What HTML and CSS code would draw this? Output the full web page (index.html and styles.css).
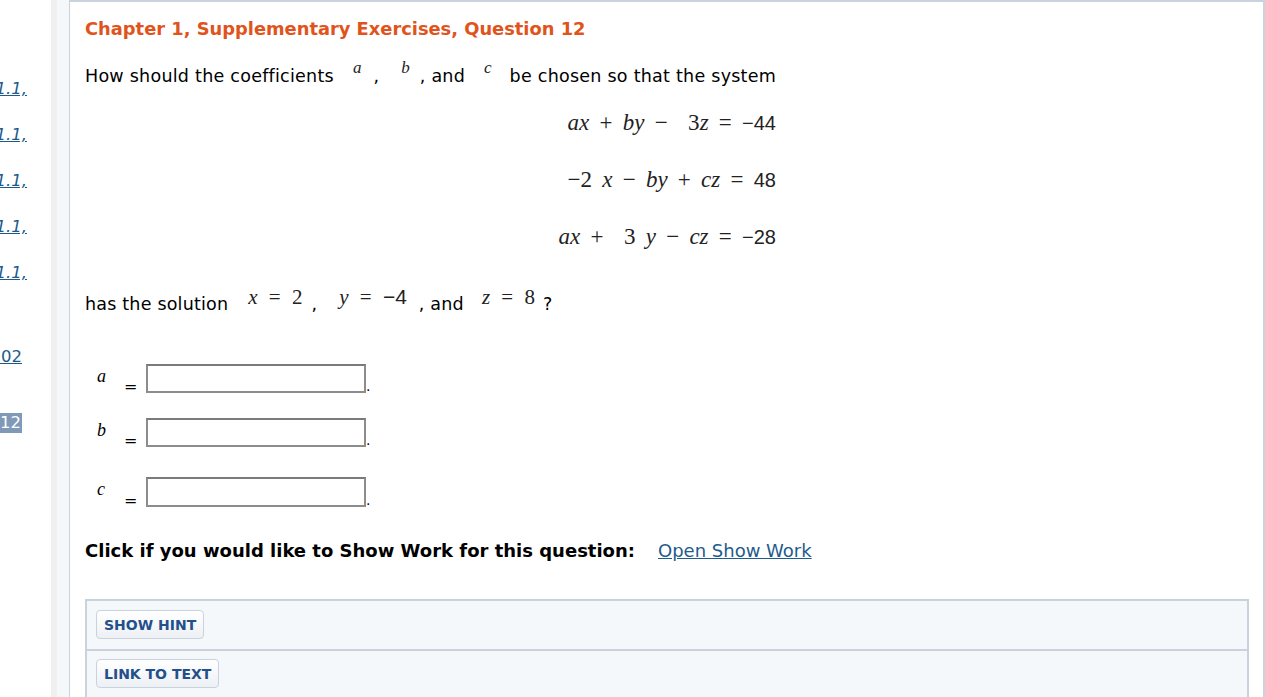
FILE: index.html
```html
<!DOCTYPE html>
<html>
<head>
<meta charset="utf-8">
<link rel="stylesheet" href="styles.css">
</head>
<body>
<div class="page">
  <nav class="sidebar">
    <div class="nav-item nav-first"><a class="nav-link it" href="#">Section 1.1,</a></div>
    <div class="nav-item"><a class="nav-link it" href="#">Section 1.1,</a></div>
    <div class="nav-item"><a class="nav-link it" href="#">Section 1.1,</a></div>
    <div class="nav-item"><a class="nav-link it" href="#">Section 1.1,</a></div>
    <div class="nav-item"><a class="nav-link it" href="#">Section 1.1,</a></div>
    <div class="nav-item nav-gap"><a class="nav-link short" href="#">Question 02</a></div>
    <div class="nav-item nav-gap2"><span class="nav-current">Question 12</span></div>
  </nav>
  <div class="gutter"><div class="gutter-gray"></div><div class="gutter-blue"></div></div>
  <main class="panel">
    <h1 class="title">Chapter 1, Supplementary Exercises, Question 12</h1>
    <p class="q-line">How should the coefficients<span class="m up"><i>a</i></span>,<span class="m up up-b"><i>b</i></span>, and<span class="m up up-c"><i>c</i></span>be chosen so that the system</p>
    <div class="system">
      <div class="eq"><i>ax</i> + <i>by</i> −&nbsp; 3<i>z</i> = <span class="num">−44</span></div>
      <div class="eq"><span class="lead">−2</span> <i>x</i> − <i>by</i> + <i>cz</i> = <span class="num">48</span></div>
      <div class="eq"><i>ax</i> +&nbsp; 3 <i>y</i> − <i>cz</i> = <span class="num">−28</span></div>
    </div>
    <p class="sol-line">has the solution<span class="m up2"><i>x</i> = 2</span>,<span class="m up2 up2-y"><i>y</i> = <span class="num">−4</span></span>, and<span class="m up2 up2-z"><i>z</i> = 8</span>?</p>
    <div class="answers">
      <div class="ans"><span class="var"><i>a</i></span><span class="eqs">=</span><span class="box"></span><span class="dot">.</span></div>
      <div class="ans"><span class="var"><i>b</i></span><span class="eqs">=</span><span class="box"></span><span class="dot">.</span></div>
      <div class="ans ans-c"><span class="var"><i>c</i></span><span class="eqs">=</span><span class="box"></span><span class="dot">.</span></div>
    </div>
    <p class="work"><span class="work-label">Click if you would like to Show Work for this question:</span><a class="work-link" href="#">Open Show Work</a></p>
    <div class="tools">
      <div class="tool-row"><button class="tool-btn">SHOW HINT</button></div>
      <div class="tool-row"><button class="tool-btn">LINK TO TEXT</button></div>
    </div>
  </main>
</div>
</body>
</html>
```
FILE: styles.css
```css
html, body {
  margin: 0;
  padding: 0;
  background: #ffffff;
  overflow: hidden;
}
body {
  font-family: "DejaVu Sans", Verdana, sans-serif;
  font-size: 17.5px;
  letter-spacing: 0.2px;
  color: #000;
}
.page {
  display: flex;
  height: 697px;
  width: 1265px;
  overflow: hidden;
}
.sidebar {
  width: 51px;
  flex: none;
  overflow: hidden;
  display: flex;
  flex-direction: column;
  background: #fff;
}
.nav-item {
  display: flex;
  justify-content: flex-end;
  white-space: nowrap;
  width: 27px;
  height: 46px;
  line-height: 20px;
  flex: none;
}
.nav-first { margin-top: 79px; }
.nav-gap { margin-top: 38px; width: 22px; height: 66px; }
.nav-gap2 { width: 22px; }
.nav-link {
  color: #1d5a8a;
  text-decoration: underline;
  font-size: 16.5px;
  letter-spacing: 0;
}
.nav-link.it { font-style: italic; }
.nav-current {
  background: #8099b6;
  color: #fff;
  font-size: 16.5px;
  letter-spacing: 0;
  padding: 0 1px 0 0;
  height: 20px;
  line-height: 20px;
}
.gutter {
  display: flex;
  flex: none;
  width: 18px;
}
.gutter-gray { width: 6px; background: #f0f0f0; }
.gutter-blue { width: 12px; background: #f5f8fb; }
.panel {
  flex: 1;
  border-left: 1px solid #c9d3de;
  border-top: 2px solid #c9d3de;
  border-right: 2px solid #c9d3de;
  padding: 0 14px 0 15px;
  background: #fff;
}
.title {
  margin: 15px 0 0 0;
  font-size: 17.85px;
  letter-spacing: 0;
  font-weight: bold;
  color: #e0541c;
  line-height: 24px;
}
.q-line {
  margin: 23px 0 0 0;
  line-height: 24px;
  white-space: nowrap;
  letter-spacing: 0.25px;
}
.m {
  font-family: "Liberation Serif", "Times New Roman", serif;
  font-size: 17px;
  letter-spacing: 0;
  display: inline-block;
  color: #222;
}
.m i { font-style: italic; }
.up { position: relative; top: -9px; margin: 0 12px 0 19px; }
.up-b { margin-left: 22px; margin-right: 10px; }
.up-c { margin-left: 19px; margin-right: 18px; }
.up2 {
  position: relative;
  top: -6px;
  margin: 0 9px 0 20px;
  font-size: 21px;
  word-spacing: 6px;
}
.up2-y { margin-left: 22px; margin-right: 12px; }
.up2-z { margin-left: 18px; margin-right: 8px; }
.num { font-family: "Liberation Sans", Arial, sans-serif; }
.system {
  margin-top: 20px;
  width: 691px;
  display: flex;
  flex-direction: column;
  align-items: flex-end;
  gap: 29px;
}
.eq {
  font-family: "Liberation Serif", "Times New Roman", serif;
  font-size: 23px;
  letter-spacing: 0;
  word-spacing: 4.5px;
  line-height: 28px;
  white-space: nowrap;
  color: #222;
}
.eq .num { font-size: 20px; }
.sol-line {
  margin: 40px 0 0 0;
  line-height: 24px;
  white-space: nowrap;
}
.answers {
  margin-top: 48px;
  display: flex;
  flex-direction: column;
  gap: 25px;
}
.ans {
  display: flex;
  align-items: flex-end;
  height: 29px;
}
.ans-c { margin-top: 5px; height: 30px; }
.var {
  font-family: "Liberation Serif", "Times New Roman", serif;
  font-size: 18px;
  width: 39px;
  padding-left: 12px;
  align-self: flex-start;
  line-height: 20px;
  margin-top: 2px;
  box-sizing: border-box;
}
.eqs {
  width: 22px;
  line-height: 13px;
  font-size: 16px;
}
.box {
  width: 216px;
  height: 25px;
  border: 2px solid #8c8c8c;
  border-top-color: #7a7a7a;
  background: #fff;
  box-sizing: content-box;
}
.ans-c .box { height: 26px; }
.dot { line-height: 14px; font-size: 14px; }
.work {
  margin: 32px 0 0 0;
  line-height: 24px;
  white-space: nowrap;
  letter-spacing: 0;
}
.work-label {
  font-weight: bold;
  font-size: 18px;
}
.work-link {
  margin-left: 23px;
  color: #1f5b8c;
  text-decoration: underline;
  font-size: 18px;
}
.tools {
  margin-top: 36px;
  border: 2px solid #c9d3de;
  border-bottom: none;
  background: #f5f8fb;
}
.tool-row {
  height: 48px;
  padding: 9px 0 0 9px;
  box-sizing: border-box;
}
.tool-row + .tool-row { border-top: 2px solid #c9d3de; height: 60px; padding-top: 8px; }
.tool-btn {
  font-family: "DejaVu Sans", Verdana, sans-serif;
  font-weight: bold;
  font-size: 14px;
  letter-spacing: 0;
  color: #234f8a;
  border: 1px solid #c9d3de;
  border-radius: 4px;
  background: linear-gradient(#ffffff, #edf0f4);
  height: 29px;
  padding: 0 7px;
}
```
